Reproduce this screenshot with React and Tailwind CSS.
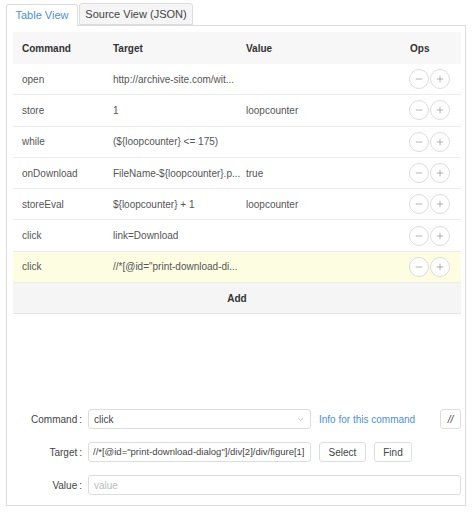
import { Minus, Plus, ChevronDown } from 'lucide-react'

const rows = [
    { cmd: 'open', target: 'http://archive-site.com/wit...', value: '' },
    { cmd: 'store', target: '1', value: 'loopcounter' },
    { cmd: 'while', target: '(${loopcounter} <= 175)', value: '' },
    { cmd: 'onDownload', target: 'FileName-${loopcounter}.p...', value: 'true' },
    { cmd: 'storeEval', target: '${loopcounter} + 1', value: 'loopcounter' },
    { cmd: 'click', target: 'link=Download', value: '' },
    { cmd: 'click', target: '//*[@id="print-download-di...', value: '', active: true },
]

function OpButton({ children }) {
    return (
        <button className="w-[20px] h-[20px] rounded-full border border-[#dcdcdc] bg-white flex items-center justify-center text-[#888]">
            {children}
        </button>
    )
}

function Label({ children }) {
    return <span className="w-[81px] text-right pr-[6px] text-[#444]">{children}<span className="ml-[2px]">:</span></span>
}

export default function App() {
    return (
        <div className="w-[474px] h-[512px] bg-white pt-[3px] px-[6px] text-[10px] text-[#555]" style={{ fontFamily: '"Liberation Sans", Arial, sans-serif' }}>
            <div className="flex h-[22px]">
                <div className="w-[72px] border border-b-0 border-[#ddd] rounded-t-[3px] bg-white text-[#4a90e2] flex items-center justify-center text-[11px] relative top-[1px] z-10">Table View</div>
                <div className="ml-[1px] w-[114px] border border-[#ddd] rounded-t-[3px] bg-[#f5f5f5] text-[#444] flex items-center justify-center text-[11px]">Source View (JSON)</div>
            </div>
            <div className="border border-[#ddd] h-[481px] w-[460px] pt-[6px] px-[6px] flex flex-col">
                <div className="w-[448px]">
                    <div className="flex h-[32px] items-center bg-[#f7f7f7] font-bold text-[#333]">
                        <div className="w-[91px] pl-[9px]">Command</div>
                        <div className="w-[133px] pl-[9px]">Target</div>
                        <div className="w-[163px] pl-[9px]">Value</div>
                        <div className="flex-1 pl-[10px]">Ops</div>
                    </div>
                    {rows.map((r, i) => (
                        <div key={i} className={`flex h-[31.3px] items-center border-b border-[#ececec] ${r.active ? 'bg-[#fdfde2]' : ''}`}>
                            <div className="w-[91px] pl-[9px]">{r.cmd}</div>
                            <div className="w-[133px] pl-[9px] whitespace-nowrap">{r.target}</div>
                            <div className="w-[163px] pl-[9px]">{r.value}</div>
                            <div className="flex-1 pl-[9px] flex gap-[1px]">
                                <OpButton><Minus size={10} strokeWidth={1.5} /></OpButton>
                                <OpButton><Plus size={10} strokeWidth={1.5} /></OpButton>
                            </div>
                        </div>
                    ))}
                    <div className="h-[31px] flex items-center justify-center bg-[#f5f5f5] border-b border-[#e6e6e6] text-[#333] font-bold">Add</div>
                </div>
                <div className="mt-auto mb-[10px] flex flex-col gap-[13px] -mx-[6px]">
                    <div className="flex items-center">
                        <Label>Command</Label>
                        <div className="w-[223px] h-[20px] border border-[#ddd] rounded-[3px] flex items-center justify-between px-[5px] text-[#444]">
                            <span>click</span>
                            <ChevronDown size={9} className="text-[#bbb]" />
                        </div>
                        <span className="ml-[8px] text-[#4a90e2]">Info for this command</span>
                        <button className="ml-auto mr-[4px] w-[21px] h-[20px] border border-[#ddd] rounded-[3px] text-[#444] flex items-center justify-center italic">//</button>
                    </div>
                    <div className="flex items-center">
                        <Label>Target</Label>
                        <div className="w-[223px] h-[20px] border border-[#ddd] rounded-[3px] flex items-center px-[4px] text-[#444] text-[9.5px] whitespace-nowrap overflow-hidden">//*[@id="print-download-dialog"]/div[2]/div/figure[1]</div>
                        <button className="ml-[8px] w-[47px] h-[20px] border border-[#ddd] rounded-[3px] text-[#444]">Select</button>
                        <button className="ml-[8px] w-[38px] h-[20px] border border-[#ddd] rounded-[3px] text-[#444]">Find</button>
                    </div>
                    <div className="flex items-center">
                        <Label>Value</Label>
                        <div className="flex-1 mr-[4px] h-[20px] border border-[#ddd] rounded-[3px] flex items-center px-[5px] text-[#bbb]">value</div>
                    </div>
                </div>
            </div>
        </div>
    )
}
